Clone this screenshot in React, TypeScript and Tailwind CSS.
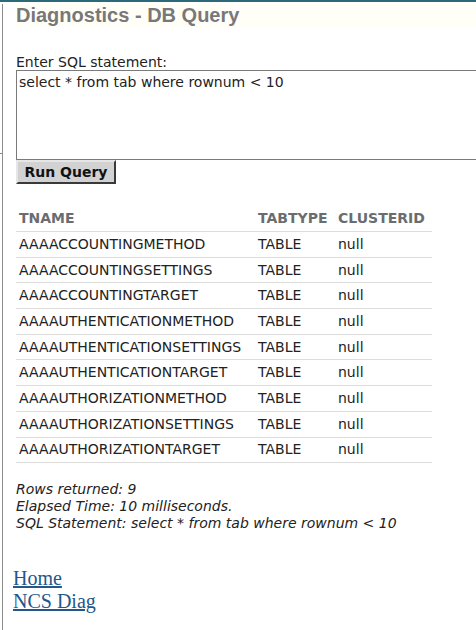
import React from "react";

const rows = [
  "AAAACCOUNTINGMETHOD",
  "AAAACCOUNTINGSETTINGS",
  "AAAACCOUNTINGTARGET",
  "AAAAUTHENTICATIONMETHOD",
  "AAAAUTHENTICATIONSETTINGS",
  "AAAAUTHENTICATIONTARGET",
  "AAAAUTHORIZATIONMETHOD",
  "AAAAUTHORIZATIONSETTINGS",
  "AAAAUTHORIZATIONTARGET",
];

const sans = "font-['DejaVu_Sans',Verdana,sans-serif]";

export default function App() {
  return (
    <div className="relative w-[476px] h-[630px] overflow-hidden bg-white border-t-2 border-[#2c6a79]">
      <span className="absolute left-0 top-[151px] w-[3px] h-px bg-[#8c8c8c]" />
      <div className="ml-[2px] h-full border-l border-[#8c8c8c]">
        <div className="pl-[13px]">
          <h1 className="mt-[2px] font-['Liberation_Sans',Arial,sans-serif] font-bold text-[20px] leading-[23px] text-[#787878] bg-[#fffff8]">
            Diagnostics - DB Query
          </h1>
          <div className={`${sans} mt-[27px] text-[14px] leading-[16px] text-[#222]`}>
            Enter SQL statement:
          </div>
          <textarea
            readOnly
            defaultValue="select * from tab where rownum < 10"
            className={`${sans} block w-[480px] h-[90px] border border-[#7a7a7a] pt-[3px] px-[2px] text-[14px] leading-[16px] text-[#222] resize-none outline-none`}
          />
          <button
            className={`${sans} block w-[100px] h-[24px] bg-[#d2d2d2] border-2 border-t-[#e6e6e6] border-l-[#e6e6e6] border-b-[#3a3a3a] border-r-[#3a3a3a] font-bold text-[14px] leading-[16px] text-[#111]`}
          >
            Run Query
          </button>

          <div className={`${sans} mt-[22px] w-[416px] text-[14px]`}>
            <div className="flex h-[26px] items-center border-b border-[#dcdcdc] font-bold text-[#6a6d70]">
              <div className="w-[239px] pl-[3px]">TNAME</div>
              <div className="w-[80px] pl-[3px]">TABTYPE</div>
              <div className="flex-1 pl-[3px]">CLUSTERID</div>
            </div>
            {rows.map((r) => (
              <div
                key={r}
                className="flex h-[25.7px] items-center border-b border-[#dcdcdc] text-[#222]"
              >
                <div className="w-[239px] pl-[3px]">{r}</div>
                <div className="w-[80px] pl-[3px]">TABLE</div>
                <div className="flex-1 pl-[3px]">null</div>
              </div>
            ))}
          </div>

          <div className={`${sans} mt-[18px] italic text-[14px] leading-[17px] text-[#222]`}>
            <div>Rows returned: 9</div>
            <div>Elapsed Time: 10 milliseconds.</div>
            <div>SQL Statement: select * from tab where rownum &lt; 10</div>
          </div>
        </div>

        <div className="pl-[10px] mt-[35px] font-['Liberation_Serif','Times_New_Roman',serif] text-[20px] leading-[23px]">
          <div>
            <a href="#" className="text-[#22588a] underline">Home</a>
          </div>
          <div>
            <a href="#" className="text-[#22588a] underline">NCS Diag</a>
          </div>
        </div>
      </div>
    </div>
  );
}
